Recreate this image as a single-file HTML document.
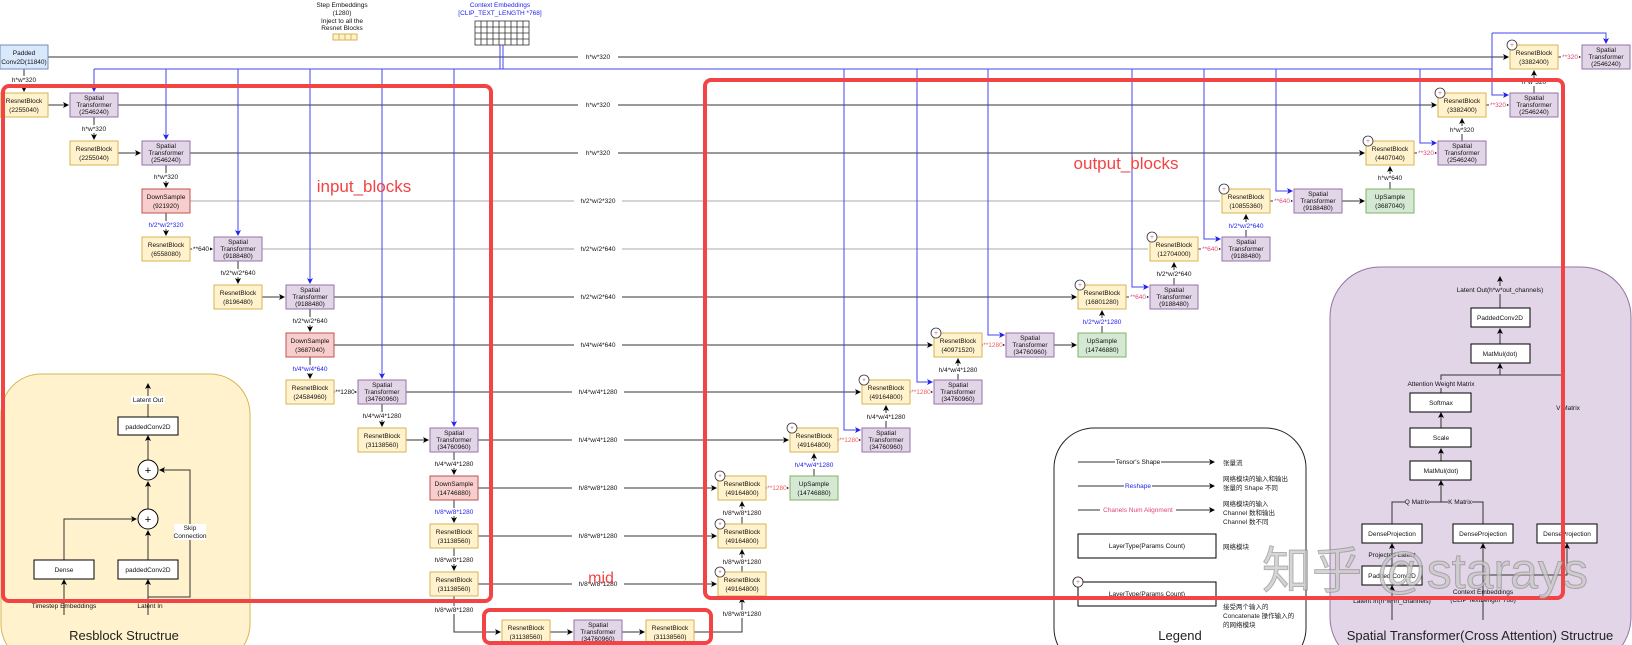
<!DOCTYPE html>
<html><head><meta charset="utf-8"><style>
html,body{margin:0;padding:0;background:#fff;}
svg{display:block;font-family:"Liberation Sans","Noto Sans CJK SC",sans-serif;}
.r{fill:#fff2cc;stroke:#d6b656;stroke-width:1}
.s{fill:#e1d5e7;stroke:#9673a6;stroke-width:1}
.d{fill:#f8cecc;stroke:#b85450;stroke-width:1}
.u{fill:#d5e8d4;stroke:#82b366;stroke-width:1}
.w{fill:#fff;stroke:#000;stroke-width:1}
.t{font-size:6.5px;fill:#111;text-anchor:middle}
.lb{font-size:6.5px;fill:#111;text-anchor:middle}
.bl{fill:#2222ee}
.pk{fill:#e0457b}
.rd{fill:#f25c5c}
.k{stroke:#333;stroke-width:1;fill:none}
.g{stroke:#bbb;stroke-width:1.2;fill:none}
.b{stroke:#4444ee;stroke-width:1;fill:none}
.bg{fill:#fff}
</style></head><body>
<svg width="1632" height="645" viewBox="0 0 1632 645" xmlns="http://www.w3.org/2000/svg">
<defs>
<marker id="a" markerWidth="6" markerHeight="6" refX="5" refY="3" orient="auto" markerUnits="userSpaceOnUse"><path d="M0,0 L6,3 L0,6 L1.5,3 z" fill="#000"/></marker>
<marker id="ab" markerWidth="6" markerHeight="6" refX="5" refY="3" orient="auto" markerUnits="userSpaceOnUse"><path d="M0,0 L6,3 L0,6 L1.5,3 z" fill="#22e"/></marker>
</defs>

<rect x="1" y="374" width="249" height="290" rx="40" fill="#fff2cc" stroke="#d6b656"/>
<text x="124" y="640" font-size="13" text-anchor="middle" fill="#222">Resblock Structrue</text>
<rect x="1054" y="428" width="252" height="240" rx="40" fill="#fff" stroke="#222"/>
<text x="1180" y="640" font-size="13" text-anchor="middle" fill="#222">Legend</text>
<rect x="1330" y="267" width="301" height="400" rx="50" fill="#e1d5e7" stroke="#9673a6"/>
<text x="1480" y="640" font-size="13" text-anchor="middle" fill="#222">Spatial Transformer(Cross Attention) Structrue</text>

<text class="t" x="342" y="7">Step Embeddings</text>
<text class="t" x="342" y="15">(1280)</text>
<text class="t" x="342" y="23">Inject to all the</text>
<text class="t" x="342" y="30">Resnet Blocks</text>
<g class="r"><rect x="333" y="34" width="6" height="6"/><rect x="339" y="34" width="6" height="6"/><rect x="345" y="34" width="6" height="6"/><rect x="351" y="34" width="6" height="6"/></g>
<text x="500" y="7" font-size="6.5" text-anchor="middle" class="bl">Context Embeddings</text>
<text x="500" y="15" font-size="6.5" text-anchor="middle" class="bl">[CLIP_TEXT_LENGTH *768]</text>
<g stroke="#333" stroke-width="0.8" fill="#fff">
<rect x="475" y="21" width="54" height="24"/>
<path d="M481,21V45M487,21V45M493,21V45M499,21V45M505,21V45M511,21V45M517,21V45M523,21V45M475,27H529M475,33H529M475,39H529"/>
</g>

<g class="k">
<path d="M48,57H1508" marker-end="url(#a)"/>
<path d="M118,105H1436" marker-end="url(#a)"/>
<path d="M190,153H1364" marker-end="url(#a)"/>
<path d="M334,297H1076" marker-end="url(#a)"/>
<path d="M334,345H932" marker-end="url(#a)"/>
<path d="M406,392H860" marker-end="url(#a)"/>
<path d="M478,440H788" marker-end="url(#a)"/>
<path d="M478,488H716" marker-end="url(#a)"/>
<path d="M478,536H716" marker-end="url(#a)"/>
<path d="M478,584H716" marker-end="url(#a)"/>
</g>
<g class="g">
<path d="M190,201H1220"/>
<path d="M262,249H1148"/>
</g>
<g>
<rect class="bg" x="578" y="53" width="40" height="8"/><text class="lb" x="598" y="59">h*w*320</text>
<rect class="bg" x="578" y="101" width="40" height="8"/><text class="lb" x="598" y="107">h*w*320</text>
<rect class="bg" x="578" y="149" width="40" height="8"/><text class="lb" x="598" y="155">h*w*320</text>
<rect class="bg" x="574" y="197" width="48" height="8"/><text class="lb" x="598" y="203">h/2*w/2*320</text>
<rect class="bg" x="574" y="245" width="48" height="8"/><text class="lb" x="598" y="251">h/2*w/2*640</text>
<rect class="bg" x="574" y="293" width="48" height="8"/><text class="lb" x="598" y="299">h/2*w/2*640</text>
<rect class="bg" x="574" y="341" width="48" height="8"/><text class="lb" x="598" y="347">h/4*w/4*640</text>
<rect class="bg" x="572" y="388" width="52" height="8"/><text class="lb" x="598" y="394">h/4*w/4*1280</text>
<rect class="bg" x="572" y="436" width="52" height="8"/><text class="lb" x="598" y="442">h/4*w/4*1280</text>
<rect class="bg" x="572" y="484" width="52" height="8"/><text class="lb" x="598" y="490">h/8*w/8*1280</text>
<rect class="bg" x="572" y="532" width="52" height="8"/><text class="lb" x="598" y="538">h/8*w/8*1280</text>
<rect class="bg" x="572" y="580" width="52" height="8"/><text class="lb" x="598" y="586">h/8*w/8*1280</text>
</g>

<g class="b">
<path d="M500,45V69M503,45V69"/>
<path d="M94,69H1492"/>
<path d="M94,69V91" marker-end="url(#ab)"/>
<path d="M166,69V139" marker-end="url(#ab)"/>
<path d="M238,69V235" marker-end="url(#ab)"/>
<path d="M310,69V283" marker-end="url(#ab)"/>
<path d="M382,69V378" marker-end="url(#ab)"/>
<path d="M454,69V426" marker-end="url(#ab)"/>
<path d="M844,69V430H860" marker-end="url(#ab)"/>
<path d="M917,69V382H932" marker-end="url(#ab)"/>
<path d="M988,69V335H1004" marker-end="url(#ab)"/>
<path d="M1132,69V287H1148" marker-end="url(#ab)"/>
<path d="M1204,69V239H1220" marker-end="url(#ab)"/>
<path d="M1276,69V191H1292" marker-end="url(#ab)"/>
<path d="M1420,69V143H1436" marker-end="url(#ab)"/>
<path d="M1492,33V95H1508" marker-end="url(#ab)"/>
<path d="M1492,33H1606V43" marker-end="url(#ab)"/>
</g>

<g class="k">
<path d="M24,69V91" marker-end="url(#a)"/>
<path d="M94,117V139" marker-end="url(#a)"/>
<path d="M166,165V187" marker-end="url(#a)"/>
<path d="M166,213V235" marker-end="url(#a)"/>
<path d="M238,261V283" marker-end="url(#a)"/>
<path d="M310,309V331" marker-end="url(#a)"/>
<path d="M310,357V378" marker-end="url(#a)"/>
<path d="M382,404V426" marker-end="url(#a)"/>
<path d="M454,452V474" marker-end="url(#a)"/>
<path d="M454,500V522" marker-end="url(#a)"/>
<path d="M454,548V570" marker-end="url(#a)"/>
<path d="M454,596V632H500" marker-end="url(#a)"/>
<path d="M48,105H68" marker-end="url(#a)"/>
<path d="M118,153H140" marker-end="url(#a)"/>
<path d="M190,249H212" marker-end="url(#a)"/>
<path d="M262,297H284" marker-end="url(#a)"/>
<path d="M334,392H356" marker-end="url(#a)"/>
<path d="M406,440H428" marker-end="url(#a)"/>
<path d="M550,632H572" marker-end="url(#a)"/>
<path d="M622,632H644" marker-end="url(#a)"/>
<path d="M694,632H742V598" marker-end="url(#a)"/>
<path d="M742,572V550" marker-end="url(#a)"/>
<path d="M742,524V502" marker-end="url(#a)"/>
<path d="M814,476V454" marker-end="url(#a)"/>
<path d="M886,428V406" marker-end="url(#a)"/>
<path d="M958,380V359" marker-end="url(#a)"/>
<path d="M1102,333V311" marker-end="url(#a)"/>
<path d="M1174,285V263" marker-end="url(#a)"/>
<path d="M1246,237V215" marker-end="url(#a)"/>
<path d="M1390,189V167" marker-end="url(#a)"/>
<path d="M1462,141V119" marker-end="url(#a)"/>
<path d="M1534,93V71" marker-end="url(#a)"/>
<path d="M766,488H788" marker-end="url(#a)"/>
<path d="M838,440H860" marker-end="url(#a)"/>
<path d="M910,392H932" marker-end="url(#a)"/>
<path d="M982,345H1004" marker-end="url(#a)"/>
<path d="M1054,345H1076" marker-end="url(#a)"/>
<path d="M1126,297H1148" marker-end="url(#a)"/>
<path d="M1198,249H1220" marker-end="url(#a)"/>
<path d="M1270,201H1292" marker-end="url(#a)"/>
<path d="M1342,201H1364" marker-end="url(#a)"/>
<path d="M1414,153H1436" marker-end="url(#a)"/>
<path d="M1486,105H1508" marker-end="url(#a)"/>
<path d="M1558,57H1580" marker-end="url(#a)"/>
</g>

<g>
<rect class="bg" x="8" y="76" width="32" height="8"/><text class="lb" x="24" y="82">h*w*320</text>
<rect class="bg" x="78" y="125" width="32" height="8"/><text class="lb" x="94" y="131">h*w*320</text>
<rect class="bg" x="150" y="173" width="32" height="8"/><text class="lb" x="166" y="179">h*w*320</text>
<rect class="bg" x="145" y="221" width="42" height="8"/><text class="lb bl" x="166" y="227">h/2*w/2*320</text>
<rect class="bg" x="217" y="269" width="42" height="8"/><text class="lb" x="238" y="275">h/2*w/2*640</text>
<rect class="bg" x="289" y="317" width="42" height="8"/><text class="lb" x="310" y="323">h/2*w/2*640</text>
<rect class="bg" x="289" y="365" width="42" height="8"/><text class="lb bl" x="310" y="371">h/4*w/4*640</text>
<rect class="bg" x="359" y="412" width="46" height="8"/><text class="lb" x="382" y="418">h/4*w/4*1280</text>
<rect class="bg" x="431" y="460" width="46" height="8"/><text class="lb" x="454" y="466">h/4*w/4*1280</text>
<rect class="bg" x="431" y="508" width="46" height="8"/><text class="lb bl" x="454" y="514">h/8*w/8*1280</text>
<rect class="bg" x="431" y="556" width="46" height="8"/><text class="lb" x="454" y="562">h/8*w/8*1280</text>
<rect class="bg" x="431" y="606" width="46" height="8"/><text class="lb" x="454" y="612">h/8*w/8*1280</text>
<rect class="bg" x="719" y="610" width="46" height="8"/><text class="lb" x="742" y="616">h/8*w/8*1280</text>
<rect class="bg" x="719" y="558" width="46" height="8"/><text class="lb" x="742" y="564">h/8*w/8*1280</text>
<rect class="bg" x="719" y="509" width="46" height="8"/><text class="lb" x="742" y="515">h/8*w/8*1280</text>
<rect class="bg" x="791" y="461" width="46" height="8"/><text class="lb bl" x="814" y="467">h/4*w/4*1280</text>
<rect class="bg" x="863" y="413" width="46" height="8"/><text class="lb" x="886" y="419">h/4*w/4*1280</text>
<rect class="bg" x="935" y="366" width="46" height="8"/><text class="lb" x="958" y="372">h/4*w/4*1280</text>
<rect class="bg" x="1079" y="318" width="46" height="8"/><text class="lb bl" x="1102" y="324">h/2*w/2*1280</text>
<rect class="bg" x="1153" y="270" width="42" height="8"/><text class="lb" x="1174" y="276">h/2*w/2*640</text>
<rect class="bg" x="1225" y="222" width="42" height="8"/><text class="lb bl" x="1246" y="228">h/2*w/2*640</text>
<rect class="bg" x="1374" y="174" width="32" height="8"/><text class="lb" x="1390" y="180">h*w*640</text>
<rect class="bg" x="1446" y="126" width="32" height="8"/><text class="lb" x="1462" y="132">h*w*320</text>
<rect class="bg" x="1518" y="78" width="32" height="8"/><text class="lb" x="1534" y="84">h*w*320</text>
<rect class="bg" x="192" y="245" width="18" height="8"/><text class="lb" x="201" y="251">**640</text>
<rect class="bg" x="335" y="388" width="20" height="8"/><text class="lb" x="345" y="394">**1280</text>
<rect class="bg" x="767" y="484" width="20" height="8"/><text class="lb rd" x="777" y="490">**1280</text>
<rect class="bg" x="839" y="436" width="20" height="8"/><text class="lb rd" x="849" y="442">**1280</text>
<rect class="bg" x="911" y="388" width="20" height="8"/><text class="lb rd" x="921" y="394">**1280</text>
<rect class="bg" x="983" y="341" width="20" height="8"/><text class="lb rd" x="993" y="347">**1280</text>
<rect class="bg" x="1129" y="293" width="18" height="8"/><text class="lb pk" x="1138" y="299">**640</text>
<rect class="bg" x="1201" y="245" width="18" height="8"/><text class="lb pk" x="1210" y="251">**640</text>
<rect class="bg" x="1273" y="197" width="18" height="8"/><text class="lb pk" x="1282" y="203">**640</text>
<rect class="bg" x="1417" y="149" width="18" height="8"/><text class="lb pk" x="1426" y="155">**320</text>
<rect class="bg" x="1489" y="101" width="18" height="8"/><text class="lb pk" x="1498" y="107">**320</text>
<rect class="bg" x="1561" y="53" width="18" height="8"/><text class="lb pk" x="1570" y="59">**320</text>
</g>

<g>
<rect x="0" y="45" width="48" height="24" fill="#dae8fc" stroke="#6c8ebf"/><text class="t" x="24" y="55">Padded</text><text class="t" x="24" y="64">Conv2D(11840)</text>
<rect class="r" x="0" y="93" width="48" height="24"/><text class="t" x="24" y="103">ResnetBlock</text><text class="t" x="24" y="112">(2255040)</text>
<rect class="s" x="70" y="93" width="48" height="24"/><text class="t" x="94" y="100">Spatial</text><text class="t" x="94" y="107">Transformer</text><text class="t" x="94" y="114">(2546240)</text>
<rect class="r" x="70" y="141" width="48" height="24"/><text class="t" x="94" y="151">ResnetBlock</text><text class="t" x="94" y="160">(2255040)</text>
<rect class="s" x="142" y="141" width="48" height="24"/><text class="t" x="166" y="148">Spatial</text><text class="t" x="166" y="155">Transformer</text><text class="t" x="166" y="162">(2546240)</text>
<rect class="d" x="142" y="189" width="48" height="24"/><text class="t" x="166" y="199">DownSample</text><text class="t" x="166" y="208">(921920)</text>
<rect class="r" x="142" y="237" width="48" height="24"/><text class="t" x="166" y="247">ResnetBlock</text><text class="t" x="166" y="256">(6558080)</text>
<rect class="s" x="214" y="237" width="48" height="24"/><text class="t" x="238" y="244">Spatial</text><text class="t" x="238" y="251">Transformer</text><text class="t" x="238" y="258">(9188480)</text>
<rect class="r" x="214" y="285" width="48" height="24"/><text class="t" x="238" y="295">ResnetBlock</text><text class="t" x="238" y="304">(8196480)</text>
<rect class="s" x="286" y="285" width="48" height="24"/><text class="t" x="310" y="292">Spatial</text><text class="t" x="310" y="299">Transformer</text><text class="t" x="310" y="306">(9188480)</text>
<rect class="d" x="286" y="333" width="48" height="24"/><text class="t" x="310" y="343">DownSample</text><text class="t" x="310" y="352">(3687040)</text>
<rect class="r" x="286" y="380" width="48" height="24"/><text class="t" x="310" y="390">ResnetBlock</text><text class="t" x="310" y="399">(24584960)</text>
<rect class="s" x="358" y="380" width="48" height="24"/><text class="t" x="382" y="387">Spatial</text><text class="t" x="382" y="394">Transformer</text><text class="t" x="382" y="401">(34760960)</text>
<rect class="r" x="358" y="428" width="48" height="24"/><text class="t" x="382" y="438">ResnetBlock</text><text class="t" x="382" y="447">(31138560)</text>
<rect class="s" x="430" y="428" width="48" height="24"/><text class="t" x="454" y="435">Spatial</text><text class="t" x="454" y="442">Transformer</text><text class="t" x="454" y="449">(34760960)</text>
<rect class="d" x="430" y="476" width="48" height="24"/><text class="t" x="454" y="486">DownSample</text><text class="t" x="454" y="495">(14746880)</text>
<rect class="r" x="430" y="524" width="48" height="24"/><text class="t" x="454" y="534">ResnetBlock</text><text class="t" x="454" y="543">(31138560)</text>
<rect class="r" x="430" y="572" width="48" height="24"/><text class="t" x="454" y="582">ResnetBlock</text><text class="t" x="454" y="591">(31138560)</text>
<rect class="r" x="502" y="620" width="48" height="24"/><text class="t" x="526" y="630">ResnetBlock</text><text class="t" x="526" y="639">(31138560)</text>
<rect class="s" x="574" y="620" width="48" height="24"/><text class="t" x="598" y="627">Spatial</text><text class="t" x="598" y="634">Transformer</text><text class="t" x="598" y="641">(34760960)</text>
<rect class="r" x="646" y="620" width="48" height="24"/><text class="t" x="670" y="630">ResnetBlock</text><text class="t" x="670" y="639">(31138560)</text>
<rect class="r" x="718" y="572" width="48" height="24"/><text class="t" x="742" y="582">ResnetBlock</text><text class="t" x="742" y="591">(49164800)</text>
<rect class="r" x="718" y="524" width="48" height="24"/><text class="t" x="742" y="534">ResnetBlock</text><text class="t" x="742" y="543">(49164800)</text>
<rect class="r" x="718" y="476" width="48" height="24"/><text class="t" x="742" y="486">ResnetBlock</text><text class="t" x="742" y="495">(49164800)</text>
<rect class="u" x="790" y="476" width="48" height="24"/><text class="t" x="814" y="486">UpSample</text><text class="t" x="814" y="495">(14746880)</text>
<rect class="r" x="790" y="428" width="48" height="24"/><text class="t" x="814" y="438">ResnetBlock</text><text class="t" x="814" y="447">(49164800)</text>
<rect class="s" x="862" y="428" width="48" height="24"/><text class="t" x="886" y="435">Spatial</text><text class="t" x="886" y="442">Transformer</text><text class="t" x="886" y="449">(34760960)</text>
<rect class="r" x="862" y="380" width="48" height="24"/><text class="t" x="886" y="390">ResnetBlock</text><text class="t" x="886" y="399">(49164800)</text>
<rect class="s" x="934" y="380" width="48" height="24"/><text class="t" x="958" y="387">Spatial</text><text class="t" x="958" y="394">Transformer</text><text class="t" x="958" y="401">(34760960)</text>
<rect class="r" x="934" y="333" width="48" height="24"/><text class="t" x="958" y="343">ResnetBlock</text><text class="t" x="958" y="352">(40971520)</text>
<rect class="s" x="1006" y="333" width="48" height="24"/><text class="t" x="1030" y="340">Spatial</text><text class="t" x="1030" y="347">Transformer</text><text class="t" x="1030" y="354">(34760960)</text>
<rect class="u" x="1078" y="333" width="48" height="24"/><text class="t" x="1102" y="343">UpSample</text><text class="t" x="1102" y="352">(14746880)</text>
<rect class="r" x="1078" y="285" width="48" height="24"/><text class="t" x="1102" y="295">ResnetBlock</text><text class="t" x="1102" y="304">(16801280)</text>
<rect class="s" x="1150" y="285" width="48" height="24"/><text class="t" x="1174" y="292">Spatial</text><text class="t" x="1174" y="299">Transformer</text><text class="t" x="1174" y="306">(9188480)</text>
<rect class="r" x="1150" y="237" width="48" height="24"/><text class="t" x="1174" y="247">ResnetBlock</text><text class="t" x="1174" y="256">(12704000)</text>
<rect class="s" x="1222" y="237" width="48" height="24"/><text class="t" x="1246" y="244">Spatial</text><text class="t" x="1246" y="251">Transformer</text><text class="t" x="1246" y="258">(9188480)</text>
<rect class="r" x="1222" y="189" width="48" height="24"/><text class="t" x="1246" y="199">ResnetBlock</text><text class="t" x="1246" y="208">(10855360)</text>
<rect class="s" x="1294" y="189" width="48" height="24"/><text class="t" x="1318" y="196">Spatial</text><text class="t" x="1318" y="203">Transformer</text><text class="t" x="1318" y="210">(9188480)</text>
<rect class="u" x="1366" y="189" width="48" height="24"/><text class="t" x="1390" y="199">UpSample</text><text class="t" x="1390" y="208">(3687040)</text>
<rect class="r" x="1366" y="141" width="48" height="24"/><text class="t" x="1390" y="151">ResnetBlock</text><text class="t" x="1390" y="160">(4407040)</text>
<rect class="s" x="1438" y="141" width="48" height="24"/><text class="t" x="1462" y="148">Spatial</text><text class="t" x="1462" y="155">Transformer</text><text class="t" x="1462" y="162">(2546240)</text>
<rect class="r" x="1438" y="93" width="48" height="24"/><text class="t" x="1462" y="103">ResnetBlock</text><text class="t" x="1462" y="112">(3382400)</text>
<rect class="s" x="1510" y="93" width="48" height="24"/><text class="t" x="1534" y="100">Spatial</text><text class="t" x="1534" y="107">Transformer</text><text class="t" x="1534" y="114">(2546240)</text>
<rect class="r" x="1510" y="45" width="48" height="24"/><text class="t" x="1534" y="55">ResnetBlock</text><text class="t" x="1534" y="64">(3382400)</text>
<rect class="s" x="1582" y="45" width="48" height="24"/><text class="t" x="1606" y="52">Spatial</text><text class="t" x="1606" y="59">Transformer</text><text class="t" x="1606" y="66">(2546240)</text>
</g>

<g fill="#fff" stroke="#333" stroke-width="0.8">
<circle cx="720" cy="572" r="5"/><circle cx="720" cy="524" r="5"/><circle cx="720" cy="476" r="5"/>
<circle cx="792" cy="428" r="5"/><circle cx="864" cy="380" r="5"/><circle cx="936" cy="333" r="5"/>
<circle cx="1080" cy="285" r="5"/><circle cx="1152" cy="237" r="5"/><circle cx="1224" cy="189" r="5"/>
<circle cx="1368" cy="141" r="5"/><circle cx="1440" cy="93" r="5"/><circle cx="1512" cy="45" r="5"/>
<circle cx="1078" cy="582" r="5"/>
</g>
<g font-size="6" fill="#e0457b" text-anchor="middle">
<text x="720" y="574">+</text><text x="720" y="526">+</text><text x="720" y="478">+</text>
<text x="792" y="430">+</text><text x="864" y="382">+</text><text x="936" y="335">+</text>
<text x="1080" y="287">+</text><text x="1152" y="239">+</text><text x="1224" y="191">+</text>
<text x="1368" y="143">+</text><text x="1440" y="95">+</text><text x="1512" y="47">+</text>
<text x="1078" y="584">+</text>
</g>

<g class="k">
<path d="M148,417V384" marker-end="url(#a)"/>
<path d="M148,460V436" marker-end="url(#a)"/>
<path d="M148,509V482" marker-end="url(#a)"/>
<path d="M148,560V531" marker-end="url(#a)"/>
<path d="M64,560V519H136" marker-end="url(#a)"/>
<path d="M64,615V580" marker-end="url(#a)"/>
<path d="M148,615V580" marker-end="url(#a)"/>
<path d="M148,597H190V470H160" marker-end="url(#a)"/>
</g>
<rect class="w" x="118" y="417" width="60" height="18"/><text class="t" x="148" y="429">paddedConv2D</text>
<circle cx="148" cy="470" r="10" fill="#fff" stroke="#000"/><text x="148" y="474" font-size="11" text-anchor="middle">+</text>
<circle cx="148" cy="519" r="10" fill="#fff" stroke="#000"/><text x="148" y="523" font-size="11" text-anchor="middle">+</text>
<rect class="w" x="34" y="560" width="60" height="19"/><text class="t" x="64" y="572">Dense</text>
<rect class="w" x="118" y="560" width="60" height="19"/><text class="t" x="148" y="572">paddedConv2D</text>
<rect x="131" y="396" width="34" height="8" fill="#fff"/><text class="t" x="148" y="402">Latent Out</text>
<rect x="174" y="524" width="32" height="16" fill="#fff"/><text class="t" x="190" y="530">Skip</text><text class="t" x="190" y="538">Connection</text>
<text class="t" x="64" y="608">Timestep Embeddings</text>
<text class="t" x="150" y="608">Latent In</text>

<g class="k">
<path d="M1078,462H1214" marker-end="url(#a)"/>
<path d="M1078,486H1214" marker-end="url(#a)"/>
<path d="M1078,510H1214" marker-end="url(#a)"/>
</g>
<rect x="1115" y="458" width="46" height="8" fill="#fff"/><text class="t" x="1138" y="464">Tensor's Shape</text>
<rect x="1124" y="482" width="28" height="8" fill="#fff"/><text class="t bl" x="1138" y="488">Reshape</text>
<rect x="1100" y="506" width="76" height="8" fill="#fff"/><text class="t pk" x="1138" y="512">Chanels Num Alignment</text>
<g font-size="6.5" fill="#222">
<text x="1223" y="465">张量流</text>
<text x="1223" y="481">网络模块的输入和输出</text><text x="1223" y="490">张量的 Shape 不同</text>
<text x="1223" y="506">网络模块的输入</text><text x="1223" y="515">Channel 数和输出</text><text x="1223" y="524">Channel 数不同</text>
<text x="1223" y="609">接受两个输入的</text><text x="1223" y="618">Concatenate 操作输入的</text><text x="1223" y="627">的网络模块</text>
<text x="1223" y="549">网络模块</text>
</g>
<rect class="w" x="1078" y="534" width="138" height="24"/><text class="t" x="1147" y="548">LayerType(Params Count)</text>
<rect class="w" x="1078" y="582" width="138" height="24"/><text class="t" x="1147" y="596">LayerType(Params Count)</text>
<circle cx="1078" cy="582" r="5" fill="#fff" stroke="#333" stroke-width="0.8"/><text x="1078" y="584" font-size="6" fill="#e0457b" text-anchor="middle">+</text>

<g class="k">
<path d="M1500,308V277" marker-end="url(#a)"/>
<path d="M1500,344V329" marker-end="url(#a)"/>
<path d="M1441,393V375H1563V524"/>
<path d="M1500,375V364" marker-end="url(#a)"/>
<path d="M1441,428V413" marker-end="url(#a)"/>
<path d="M1441,461V449" marker-end="url(#a)"/>
<path d="M1392,524V502H1483V524"/>
<path d="M1441,502V481" marker-end="url(#a)"/>
<path d="M1392,566V544" marker-end="url(#a)"/>
<path d="M1392,620V586" marker-end="url(#a)"/>
<path d="M1483,620V544" marker-end="url(#a)"/>
<path d="M1483,575H1567V544" marker-end="url(#a)"/>
</g>
<rect class="w" x="1471" y="308" width="59" height="19"/><text class="t" x="1500" y="320">PaddedConv2D</text>
<rect class="w" x="1471" y="344" width="59" height="19"/><text class="t" x="1500" y="356">MatMul(dot)</text>
<rect class="w" x="1410" y="393" width="61" height="19"/><text class="t" x="1441" y="405">Softmax</text>
<rect class="w" x="1410" y="428" width="61" height="19"/><text class="t" x="1441" y="440">Scale</text>
<rect class="w" x="1410" y="461" width="61" height="19"/><text class="t" x="1441" y="473">MatMul(dot)</text>
<rect class="w" x="1362" y="524" width="60" height="19"/><text class="t" x="1392" y="536">DenseProjection</text>
<rect class="w" x="1453" y="524" width="60" height="19"/><text class="t" x="1483" y="536">DenseProjection</text>
<rect class="w" x="1537" y="524" width="60" height="19"/><text class="t" x="1567" y="536">DenseProjection</text>
<rect class="w" x="1362" y="566" width="60" height="19"/><text class="t" x="1392" y="578">Padded Conv2D</text>
<g class="t">
<rect x="1464" y="286" width="72" height="8" fill="#e1d5e7"/><text class="t" x="1500" y="292">Latent Out(h*w*out_channels)</text>
<rect x="1406" y="380" width="70" height="8" fill="#e1d5e7"/><text class="t" x="1441" y="386">Attention Weight Matrix</text>
<rect x="1555" y="404" width="26" height="8" fill="#e1d5e7"/><text class="t" x="1568" y="410">V Matrix</text>
<rect x="1405" y="498" width="24" height="8" fill="#e1d5e7"/><text class="t" x="1417" y="504">Q Matrix</text>
<rect x="1448" y="498" width="24" height="8" fill="#e1d5e7"/><text class="t" x="1460" y="504">K Matrix</text>
<text class="t" x="1392" y="557">Projected Latent</text>
<text class="t" x="1392" y="603">Latent In(h*w*in_channels)</text>
<text class="t" x="1483" y="594">Context Embeddings</text>
<text class="t" x="1483" y="602">(CLIP TextLength*768)</text>
</g>

<g fill="none" stroke="#f24444" stroke-width="4">
<rect x="3" y="86" width="488" height="515" rx="6"/>
<rect x="484" y="610" width="227" height="33" rx="6"/>
<rect x="705" y="80" width="858" height="518" rx="6"/>
</g>
<text x="364" y="192" font-size="17" fill="#f24444" text-anchor="middle">input_blocks</text>
<text x="1126" y="169" font-size="17" fill="#f24444" text-anchor="middle">output_blocks</text>
<text x="601" y="583" font-size="16" fill="#f24444" text-anchor="middle">mid</text>

<text x="1262" y="588" font-size="50" fill="rgba(200,200,200,0.75)" stroke="rgba(120,120,120,0.5)" stroke-width="1" textLength="326" lengthAdjust="spacingAndGlyphs">知乎 @starays</text>
</svg>
</body></html>
